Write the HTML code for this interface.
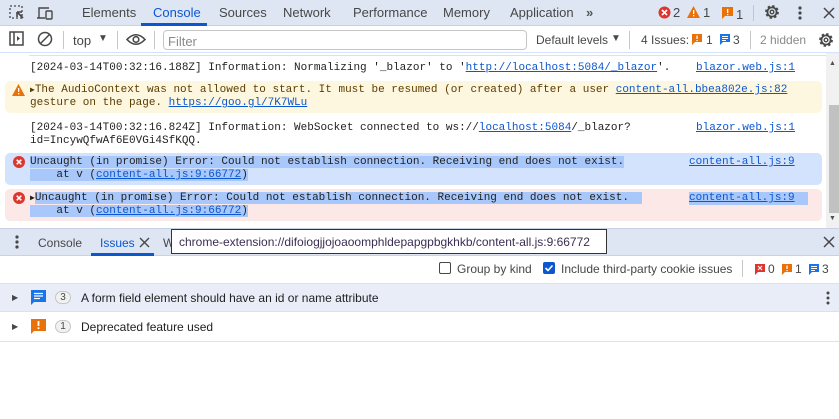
<!DOCTYPE html>
<html><head><meta charset="utf-8"><style>
*{margin:0;padding:0;box-sizing:border-box}
body{width:839px;height:419px;overflow:hidden;background:#fff;font-family:"Liberation Sans",Arial,sans-serif;font-size:12px;color:#1f1f1f;position:relative}
.a{position:absolute}
.mono{font-family:"Liberation Mono",monospace;font-size:11px;line-height:13px;white-space:pre;color:#1f1f1f}
.lnk{color:#0b57d0;text-decoration:underline}
.tab{position:absolute;top:5px;font-size:13px;color:#474747}
.sel{background:#a8c7fa}
</style></head><body>
<svg width="0" height="0" style="position:absolute"><defs>
<g id="gear"><circle cx="8" cy="8" r="5.6" fill="none" stroke="#474747" stroke-width="2.6" stroke-dasharray="2.2,2.2"/><circle cx="8" cy="8" r="4.6" fill="none" stroke="#474747" stroke-width="1.8"/><circle cx="8" cy="8" r="1.8" fill="none" stroke="#474747" stroke-width="1.4"/></g>
<g id="xx"><path d="M2 2l10 10M12 2L2 12" stroke="#474747" stroke-width="1.5"/></g>
</defs></svg>
<!-- top bar -->
<div class="a" style="left:0;top:0;width:839px;height:26px;background:#dfe6f3;border-bottom:1px solid #c7d2e4"></div>
<svg class="a" style="left:9px;top:5px" width="18" height="16"><rect x="1" y="1" width="12" height="12" fill="none" stroke="#474747" stroke-dasharray="2,2" stroke-width="1.3"/><path d="M8 7 L14 13 M8 7 L8 12 M8 7 L13 7" stroke="#474747" stroke-width="1.6" fill="none"/></svg>
<svg class="a" style="left:36px;top:5px" width="20" height="16"><path d="M3 13V3h10M1 13h8" stroke="#474747" stroke-width="1.4" fill="none"/><rect x="10" y="6" width="6" height="8" rx="1" fill="none" stroke="#474747" stroke-width="1.4"/></svg>
<span class="tab" style="left:82px">Elements</span>
<span class="tab" style="left:153px;color:#0b57d0">Console</span>
<div class="a" style="left:141px;top:23px;width:66px;height:3px;background:#0b57d0"></div>
<span class="tab" style="left:219px">Sources</span>
<span class="tab" style="left:283px">Network</span>
<span class="tab" style="left:353px">Performance</span>
<span class="tab" style="left:443px">Memory</span>
<span class="tab" style="left:510px">Application</span>
<span class="tab" style="left:586px;font-weight:bold;color:#555">»</span>
<svg class="a" style="left:658px;top:6px" width="13" height="13"><circle cx="6.5" cy="6.5" r="6" fill="#dc362e"/><path d="M4 4l5 5M9 4l-5 5" stroke="#fff" stroke-width="1.6"/></svg>
<span class="tab" style="left:673px">2</span>
<svg class="a" style="left:687px;top:6px" width="13" height="12"><path d="M6.5 0L13 12H0Z" fill="#e8710a"/><rect x="6" y="4" width="1.3" height="4" fill="#fff"/><rect x="6" y="9" width="1.3" height="1.3" fill="#fff"/></svg>
<span class="tab" style="left:703px">1</span>
<svg class="a" style="left:722px;top:7px" width="11" height="12"><path d="M0 0h11v9H3l-3 3z" fill="#e8710a"/><rect x="5" y="2" width="1.3" height="4" fill="#fff"/><rect x="5" y="7" width="1.3" height="1.2" fill="#fff"/></svg>
<span class="tab" style="left:736px;top:7px">1</span>
<div class="a" style="left:753px;top:5px;width:1px;height:16px;background:#c4c7c5"></div>
<svg class="a" style="left:764px;top:4px" width="16" height="16"><use href="#gear"/></svg>
<svg class="a" style="left:797px;top:5px" width="6" height="16"><circle cx="3" cy="3" r="1.6" fill="#474747"/><circle cx="3" cy="8" r="1.6" fill="#474747"/><circle cx="3" cy="13" r="1.6" fill="#474747"/></svg>
<svg class="a" style="left:822px;top:6px" width="14" height="14"><use href="#xx"/></svg>
<!-- toolbar 2 -->
<div class="a" style="left:0;top:52px;width:839px;height:1px;background:#d3e3fd"></div>
<svg class="a" style="left:9px;top:31px" width="16" height="16"><rect x="1" y="1" width="13" height="13" fill="none" stroke="#474747" stroke-width="1.5"/><path d="M5 1v13" stroke="#474747" stroke-width="1.5"/><path d="M8 5l3 2.5L8 10z" fill="#474747"/></svg>
<svg class="a" style="left:37px;top:31px" width="16" height="16"><circle cx="8" cy="8" r="6.5" fill="none" stroke="#474747" stroke-width="1.5"/><path d="M3.5 12.5l9-9" stroke="#474747" stroke-width="1.5"/></svg>
<div class="a" style="left:63px;top:31px;width:1px;height:18px;background:#c4c7c5"></div>
<span class="a" style="left:73px;top:33px;font-size:13px;color:#474747">top</span>
<span class="a" style="left:98px;top:33px;font-size:10px;color:#474747">▼</span>
<div class="a" style="left:117px;top:31px;width:1px;height:18px;background:#c4c7c5"></div>
<svg class="a" style="left:126px;top:33px" width="20" height="13"><path d="M1 6.5Q10 -3 19 6.5Q10 16 1 6.5Z" fill="none" stroke="#474747" stroke-width="1.6"/><circle cx="10" cy="6.5" r="2.8" fill="none" stroke="#474747" stroke-width="1.6"/></svg>
<div class="a" style="left:154px;top:31px;width:1px;height:18px;background:#c4c7c5"></div>
<div class="a" style="left:163px;top:30px;width:364px;height:20px;border:1px solid #c4c7c5;border-radius:4px"></div>
<span class="a" style="left:168px;top:34px;font-size:13px;color:#8a8a8a">Filter</span>
<span class="a" style="left:536px;top:33px;font-size:12px;color:#474747">Default levels</span>
<span class="a" style="left:611px;top:33px;font-size:10px;color:#474747">▼</span>
<div class="a" style="left:629px;top:31px;width:1px;height:18px;background:#c4c7c5"></div>
<span class="a" style="left:641px;top:33px;font-size:12px;color:#474747">4 Issues:</span>
<svg class="a" style="left:692px;top:34px" width="10" height="11"><path d="M0 0h10v8H3l-3 3z" fill="#e8710a"/><rect x="4.4" y="1.5" width="1.3" height="3.5" fill="#fff"/><rect x="4.4" y="6" width="1.3" height="1.2" fill="#fff"/></svg>
<span class="a" style="left:706px;top:33px;color:#474747">1</span>
<svg class="a" style="left:720px;top:34px" width="10" height="11"><path d="M0 0h10v8H3l-3 3z" fill="#1a73e8"/><path d="M2 2.5h6M2 4.5h6M2 6.5h4" stroke="#fff" stroke-width="1"/></svg>
<span class="a" style="left:733px;top:33px;color:#474747">3</span>
<div class="a" style="left:750px;top:31px;width:1px;height:18px;background:#c4c7c5"></div>
<span class="a" style="left:760px;top:33px;color:#8a8a8a">2 hidden</span>
<svg class="a" style="left:818px;top:32px" width="16" height="16"><use href="#gear"/></svg>
<!-- console -->
<div class="a" style="left:29px;top:55px;width:797px;height:1px;background:#d3e3fd"></div>
<div class="a mono" style="left:30px;top:62px">[2024-03-14T00:32:16.188Z] Information: Normalizing '_blazor' to '<span class="lnk">http://localhost:5084/_blazor</span>'.</div>
<div class="a mono lnk" style="left:696px;top:62px">blazor.web.js:1</div>
<div class="a" style="left:5px;top:81px;width:817px;height:32px;background:#fef7e0;border-radius:5px"></div>
<svg class="a" style="left:12px;top:84px" width="13" height="12"><path d="M6.5 0L13 12H0Z" fill="#e8710a"/><rect x="6" y="4" width="1.3" height="4" fill="#fff"/><rect x="6" y="9" width="1.3" height="1.3" fill="#fff"/></svg>
<div class="a mono" style="left:30px;top:84px;color:#5c3c00"><span style="font-size:8px">▶</span>The AudioContext was not allowed to start. It must be resumed (or created) after a user <span class="lnk">content-all.bbea802e.js:82</span>
gesture on the page. <span class="lnk">https://goo.gl/7K7WLu</span></div>
<div class="a mono" style="left:30px;top:122px">[2024-03-14T00:32:16.824Z] Information: WebSocket connected to ws://<span class="lnk">localhost:5084</span>/_blazor?
id=IncywQfwAf6E0VGi4SfKQQ.</div>
<div class="a mono lnk" style="left:696px;top:122px">blazor.web.js:1</div>
<div class="a" style="left:5px;top:153px;width:817px;height:32px;background:#d3e3fd;border-radius:5px"></div>
<svg class="a" style="left:13px;top:156px" width="12" height="12"><circle cx="6" cy="6" r="6" fill="#dc362e"/><path d="M3.7 3.7l4.6 4.6M8.3 3.7l-4.6 4.6" stroke="#fff" stroke-width="1.6"/></svg>
<div class="a mono" style="left:30px;top:156px"><span class="sel">Uncaught (in promise) Error: Could not establish connection. Receiving end does not exist.</span>
<span class="sel">    at v (<span class="lnk">content-all.js:9:66772</span>)</span></div>
<div class="a mono lnk" style="left:689px;top:156px">content-all.js:9</div>
<div class="a" style="left:5px;top:189px;width:817px;height:32px;background:#fce8e6;border-radius:5px"></div>
<svg class="a" style="left:13px;top:192px" width="12" height="12"><circle cx="6" cy="6" r="6" fill="#dc362e"/><path d="M3.7 3.7l4.6 4.6M8.3 3.7l-4.6 4.6" stroke="#fff" stroke-width="1.6"/></svg>
<div class="a" style="left:689px;top:192px;width:119px;height:13px;background:#a8c7fa"></div>
<div class="a mono" style="left:30px;top:192px"><span style="font-size:8px">▶</span><span class="sel">Uncaught (in promise) Error: Could not establish connection. Receiving end does not exist.  </span>
<span class="sel">    at v (<span class="lnk">content-all.js:9:66772</span>)</span></div>
<div class="a mono lnk" style="left:689px;top:192px">content-all.js:9</div>
<!-- scrollbar -->
<div class="a" style="left:826px;top:53px;width:13px;height:175px;background:#f1f1f1"></div>
<div class="a" style="left:829px;top:60px;font-size:7px;color:#505050">▲</div>
<div class="a" style="left:829px;top:105px;width:10px;height:108px;background:#c1c1c1"></div>
<div class="a" style="left:829px;top:215px;font-size:7px;color:#505050">▼</div>
<!-- drawer -->
<div class="a" style="left:0;top:228px;width:839px;height:28px;background:#dfe6f3;border-top:1px solid #c7d2e4;border-bottom:1px solid #c7d2e4"></div>
<svg class="a" style="left:14px;top:234px" width="6" height="16"><circle cx="3" cy="3" r="1.6" fill="#474747"/><circle cx="3" cy="8" r="1.6" fill="#474747"/><circle cx="3" cy="13" r="1.6" fill="#474747"/></svg>
<span class="a" style="left:38px;top:236px;font-size:12px;color:#474747">Console</span>
<span class="a" style="left:100px;top:236px;font-size:12px;color:#0b57d0">Issues</span>
<svg class="a" style="left:139px;top:237px" width="11" height="11"><path d="M1 1l9 9M10 1L1 10" stroke="#474747" stroke-width="1.4"/></svg>
<div class="a" style="left:91px;top:253px;width:63px;height:3px;background:#0b57d0"></div>
<span class="a" style="left:163px;top:236px;font-size:12px;color:#474747">W</span>
<div class="a" style="left:171px;top:229px;width:436px;height:25px;background:#fff;border:1px solid #333"></div>
<span class="a" style="left:179px;top:235px;font-size:12px;color:#3c2e52">chrome-extension://difoiogjjojoaoomphldepapgpbgkhkb/content-all.js:9:66772</span>
<svg class="a" style="left:822px;top:235px" width="14" height="14"><use href="#xx"/></svg>
<!-- issues toolbar -->
<div class="a" style="left:439px;top:262px;width:12px;height:12px;border:1px solid #474747;border-radius:2px"></div>
<span class="a" style="left:457px;top:262px;color:#474747">Group by kind</span>
<div class="a" style="left:543px;top:262px;width:12px;height:12px;background:#0b57d0;border-radius:2px"></div>
<svg class="a" style="left:543px;top:262px" width="12" height="12"><path d="M2.5 6l2.5 2.5 4.5-5" stroke="#fff" stroke-width="1.6" fill="none"/></svg>
<span class="a" style="left:561px;top:262px;color:#474747">Include third-party cookie issues</span>
<div class="a" style="left:742px;top:260px;width:1px;height:17px;background:#c4c7c5"></div>
<svg class="a" style="left:755px;top:264px" width="10" height="11"><path d="M0 0h10v8H3l-3 3z" fill="#dc362e"/><path d="M3 2l4 4M7 2l-4 4" stroke="#fff"/></svg>
<span class="a" style="left:768px;top:262px;color:#474747">0</span>
<svg class="a" style="left:782px;top:264px" width="10" height="11"><path d="M0 0h10v8H3l-3 3z" fill="#e8710a"/><rect x="4.4" y="1.5" width="1.3" height="3.5" fill="#fff"/><rect x="4.4" y="6" width="1.3" height="1.2" fill="#fff"/></svg>
<span class="a" style="left:795px;top:262px;color:#474747">1</span>
<svg class="a" style="left:809px;top:264px" width="10" height="11"><path d="M0 0h10v8H3l-3 3z" fill="#1a73e8"/><path d="M2 2.5h6M2 4.5h6M2 6.5h4" stroke="#fff" stroke-width="1"/></svg>
<span class="a" style="left:822px;top:262px;color:#474747">3</span>
<!-- issue rows -->
<div class="a" style="left:0;top:283px;width:839px;height:29px;background:#e8edf7;border-top:1px solid #d3e3fd;border-bottom:1px solid #d3e3fd"></div>
<span class="a" style="left:12px;top:293px;font-size:8px;color:#474747">▶</span>
<svg class="a" style="left:30px;top:289px" width="16" height="17"><path d="M1 1h15v12H4l-3 3z" fill="#1a73e8"/><path d="M4 4.5h9M4 7h9M4 9.5h6" stroke="#fff" stroke-width="1.2"/></svg>
<div class="a" style="left:55px;top:291px;width:16px;height:13px;border:1px solid #c4c7c5;border-radius:7px;background:#f1f1f1;font-size:10px;text-align:center;line-height:11px;color:#474747">3</div>
<span class="a" style="left:81px;top:291px;font-size:12px;color:#1f1f1f">A form field element should have an id or name attribute</span>
<svg class="a" style="left:825px;top:290px" width="6" height="16"><circle cx="3" cy="3" r="1.5" fill="#474747"/><circle cx="3" cy="8" r="1.5" fill="#474747"/><circle cx="3" cy="13" r="1.5" fill="#474747"/></svg>
<span class="a" style="left:12px;top:322px;font-size:8px;color:#474747">▶</span>
<svg class="a" style="left:30px;top:318px" width="16" height="17"><path d="M1 1h15v12H4l-3 3z" fill="#e8710a"/><rect x="7.6" y="3" width="1.8" height="5" fill="#fff"/><rect x="7.6" y="9.3" width="1.8" height="1.8" fill="#fff"/></svg>
<div class="a" style="left:55px;top:320px;width:16px;height:13px;border:1px solid #c4c7c5;border-radius:7px;background:#f1f1f1;font-size:10px;text-align:center;line-height:11px;color:#474747">1</div>
<span class="a" style="left:81px;top:320px;font-size:12px;color:#1f1f1f">Deprecated feature used</span>
<div class="a" style="left:0;top:341px;width:839px;height:1px;background:#d3e3fd"></div>
</body></html>
